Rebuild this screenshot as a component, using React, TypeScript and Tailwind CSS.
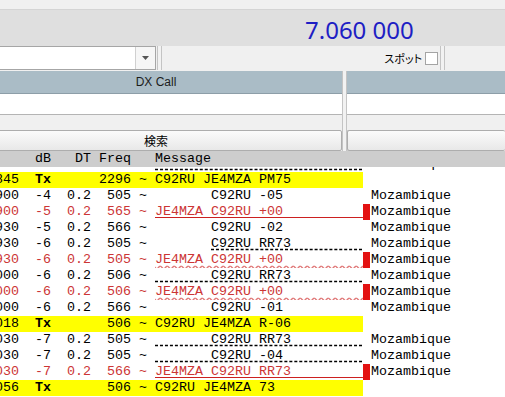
import React from 'react';

type Kind = 'tx' | 'rx' | 'me';
type Line = 'none' | 'solid' | 'wavy' | 'dash' | 'dashText';

interface Decode {
    time: string;
    db: string;
    dt: string;
    freq: string;
    msg: string;
    kind: Kind;
    line?: Line;
}

const UI_FONT = "font-['Liberation_Sans','Noto_Sans_CJK_JP',sans-serif]";
const MONO = "font-['Liberation_Mono','Courier_New',monospace]";

// partial row scrolled off above, then the visible rows
const earlier: Decode = { time: '100830', db: '-4', dt: '0.2', freq: '505', msg: '       C92RU PM75', kind: 'rx', line: 'dash' };

const decodes: Decode[] = [
    { time: '100845', db: 'Tx', dt: '', freq: '2296', msg: 'C92RU JE4MZA PM75', kind: 'tx' },
    { time: '100900', db: '-4', dt: '0.2', freq: '505', msg: '       C92RU -05', kind: 'rx' },
    { time: '100900', db: '-5', dt: '0.2', freq: '565', msg: 'JE4MZA C92RU +00', kind: 'me', line: 'solid' },
    { time: '100930', db: '-5', dt: '0.2', freq: '566', msg: '       C92RU -02', kind: 'rx' },
    { time: '100930', db: '-6', dt: '0.2', freq: '505', msg: '       C92RU RR73', kind: 'rx', line: 'dashText' },
    { time: '100930', db: '-6', dt: '0.2', freq: '505', msg: 'JE4MZA C92RU +00', kind: 'me', line: 'wavy' },
    { time: '101000', db: '-6', dt: '0.2', freq: '506', msg: '       C92RU RR73', kind: 'rx', line: 'dash' },
    { time: '101000', db: '-6', dt: '0.2', freq: '506', msg: 'JE4MZA C92RU +00', kind: 'me', line: 'wavy' },
    { time: '101000', db: '-6', dt: '0.2', freq: '566', msg: '       C92RU -01', kind: 'rx' },
    { time: '101018', db: 'Tx', dt: '', freq: '506', msg: 'C92RU JE4MZA R-06', kind: 'tx' },
    { time: '101030', db: '-7', dt: '0.2', freq: '505', msg: '       C92RU RR73', kind: 'rx', line: 'dash' },
    { time: '101030', db: '-7', dt: '0.2', freq: '505', msg: '       C92RU -04', kind: 'rx', line: 'dash' },
    { time: '101030', db: '-7', dt: '0.2', freq: '566', msg: 'JE4MZA C92RU RR73', kind: 'me', line: 'solid' },
    { time: '101056', db: 'Tx', dt: '', freq: '506', msg: 'C92RU JE4MZA 73', kind: 'tx' },
];

const lineClass: Record<Line, string> = {
    none: '',
    solid: 'underline decoration-solid decoration-[#cc2020] underline-offset-[2px]',
    wavy: 'underline decoration-wavy decoration-[#e07878] underline-offset-[2px]',
    dash: 'underline decoration-dashed decoration-black underline-offset-[2px]',
    dashText: 'underline decoration-dashed decoration-black underline-offset-[2px]',
};

const DecodeRow: React.FC<{ d: Decode; className?: string }> = ({ d, className = '' }) => {
    const isTx = d.kind === 'tx';
    const color = d.kind === 'me' ? 'text-[#cc3535]' : 'text-black';
    const line = d.line ?? 'none';
    const msg = d.msg.padEnd(26, ' ');
    const lead = line === 'dashText' ? msg.length - msg.trimStart().length : 0;

    return (
        <div className={`flex h-[16px] leading-[16px] whitespace-pre ${className}`}>
            <div className={`flex ${isTx ? 'bg-[#ffff00]' : ''} ${color}`}>
                <span className="w-[184px] shrink-0">
                    {d.time.padStart(6, ' ')}
                    {'  '}
                    <span className={isTx ? 'font-bold' : ''}>{d.db.padStart(2, ' ')}</span>
                    {'  '}
                    {d.dt.padStart(3, ' ')}
                    {' '}
                    {d.freq.padStart(4, ' ')}
                    {' ~ '}
                </span>
                <span className="w-[208px] shrink-0 overflow-hidden">
                    {lead > 0 && <span>{msg.slice(0, lead)}</span>}
                    <span className={lineClass[line]}>{msg.slice(lead)}</span>
                </span>
            </div>
            <span className="w-[8px] shrink-0 flex items-start">
                {d.kind === 'me' && <span className="w-[7px] h-[16px] bg-[#e31212]" />}
            </span>
            {!isTx && <span className="text-black">Mozambique</span>}
        </div>
    );
};

const Splitter: React.FC<{ className?: string }> = ({ className = '' }) => (
    <div className={`w-[5px] shrink-0 border-x border-[#c4c4c4] bg-[#f2f2f2] ${className}`} />
);

const App: React.FC = () => {
    return (
        <div className={`w-[505px] h-[397px] overflow-hidden bg-[#f0f0f0] text-black ${UI_FONT}`}>
            {/* frequency band */}
            <div className="h-[10px] border-b border-[#d4d4d4] bg-[#f0f0f0]" />
            <div className="h-[36px] bg-[#dfdfdf] pl-[305px] pt-[5px] text-[24px] leading-[30px] text-[#1e1ec4] font-['Noto_Sans',sans-serif]">
                7.060 000
            </div>

            {/* combo + spot row */}
            <div className="h-[24px] flex bg-[#f0f0f0]">
                <div className="w-[156px] h-[24px] shrink-0 bg-white border border-l-0 border-[#a6a6a6] flex justify-end">
                    <div className="w-[20px] border-l border-[#d0d0d0] bg-[#f6f6f6] flex items-center justify-center">
                        <svg width="7" height="4" viewBox="0 0 7 4">
                            <path d="M0 0h7L3.5 4z" fill="#555" />
                        </svg>
                    </div>
                </div>
                <Splitter className="ml-[1px] w-[4px]" />
                <div className="flex-1 flex items-center justify-end gap-[3px] pr-[2px]">
                    <span className="text-[11px] leading-[14px] font-['Noto_Sans_CJK_JP',sans-serif] [font-feature-settings:'palt']">スポット</span>
                    <span className="w-[13px] h-[13px] bg-white border border-[#a4a4a4]" />
                </div>
                <Splitter className="w-[4px]" />
                <div className="w-[60px] shrink-0" />
            </div>

            {/* DX call panels */}
            <div className="flex h-[81px] pt-[1px]">
                <div className="w-[372px] ml-[-30px] shrink-0 flex flex-col">
                    <div className="h-[23px] bg-[#aabcc6] border-b border-[#8d9ea8] flex items-center justify-center text-[12px] text-[#1c1c1c]">
                        DX Call
                    </div>
                    <div className="h-[21px] bg-white border-b border-[#b4b4b4]" />
                    <div className="h-[15px]" />
                    <div className="h-[21px] rounded-[2px] border border-[#adadad] bg-[linear-gradient(#fbfbfb,#e8e8e8)] flex items-center justify-center text-[12px] font-['Noto_Sans_CJK_JP',sans-serif]">
                        検索
                    </div>
                </div>
                <Splitter />
                <div className="flex-1 flex flex-col">
                    <div className="h-[23px] bg-[#aabcc6] border-b border-[#8d9ea8]" />
                    <div className="h-[21px] bg-white border-b border-[#b4b4b4]" />
                    <div className="h-[15px]" />
                    <div className="h-[21px] rounded-[2px] border border-r-0 border-[#adadad] bg-[linear-gradient(#fbfbfb,#e8e8e8)]" />
                </div>
            </div>

            {/* decode table */}
            <div className={`text-[13.333px] ${MONO}`}>
                <div className="h-[16px] leading-[16px] bg-[#cdcdcd] whitespace-pre ml-[-29px]">
                    {'        dB   DT Freq   Message'}
                </div>
                <div className="h-[230px] overflow-hidden bg-white">
                    <div className="ml-[-29px] mt-[-11px]">
                        <DecodeRow d={earlier} />
                        {decodes.map((d, i) => (
                            <DecodeRow key={i} d={d} />
                        ))}
                    </div>
                </div>
            </div>
        </div>
    );
};

export default App;
